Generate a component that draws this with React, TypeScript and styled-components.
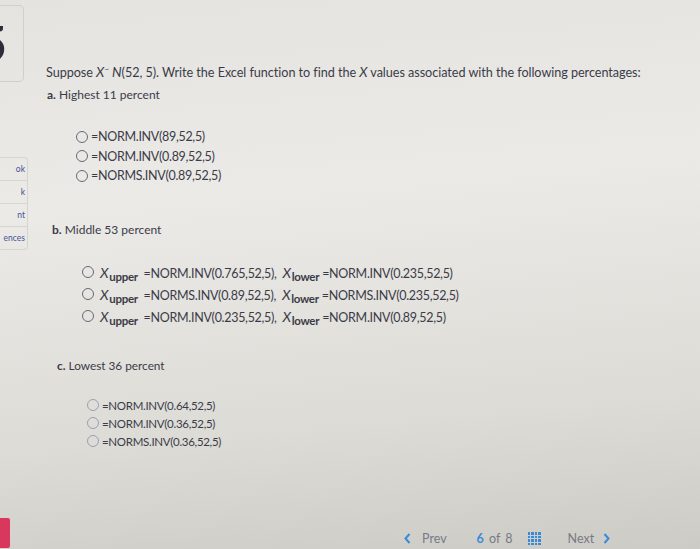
import React from 'react'
import styled, {createGlobalStyle} from 'styled-components'

const Global = createGlobalStyle`
  html, body {
    margin: 0;
    padding: 0;
    height: 100%;
  }
  body {
    font-family: Lato, "Open Sans", sans-serif;
    color: #3b3b48;
    background: linear-gradient(175deg, #e4e3df 0%, #ebeae6 35%, #dcdbd6 75%, #cdcbc6 100%);
    overflow: hidden;
  }
`

const Page = styled.div`
  display: flex;
  width: 700px;
  height: 549px;
`

const Sidebar = styled.aside`
  width: 28px;
  display: flex;
  flex-direction: column;
  flex-shrink: 0;
`

const NumberCard = styled.div`
  width: 23px;
  height: 75px;
  margin-top: 5px;
  border: 1px solid #d0cfcb;
  border-left: none;
  border-radius: 0 5px 5px 0;
  display: flex;
  align-items: center;
  justify-content: flex-end;
  overflow: hidden;
  span {
    font-size: 50px;
    line-height: 1;
    font-weight: 700;
    color: #2d2d3a;
    margin-right: 16px;
    margin-bottom: 2px;
  }
`

const Tabs = styled.div`
  margin-top: 75px;
  width: 27px;
  border: 1px solid #d6d5d1;
  border-left: none;
  border-radius: 0 4px 4px 0;
  display: flex;
  flex-direction: column;
  overflow: hidden;
`

const Tab = styled.div`
  height: 22px;
  display: flex;
  align-items: center;
  justify-content: flex-end;
  padding-right: 2px;
  font-size: 8.5px;
  color: #45549a;
  white-space: nowrap;
  border-bottom: 1px solid #d6d5d1;
  &:last-child { border-bottom: none; }
`

const Badge = styled.div`
  margin-top: auto;
  margin-bottom: 1px;
  width: 10px;
  height: 30px;
  background: #d8385e;
  border-radius: 0 2px 2px 0;
`

const Main = styled.main`
  flex: 1;
  display: flex;
  flex-direction: column;
  padding-top: 64px;
`

const Prompt = styled.p`
  margin: 0 0 0 18px;
  font-size: 12.65px;
  letter-spacing: -0.05px;
  white-space: nowrap;
  i { font-style: italic; font-size: 13.5px; }
  sup { font-size: 8px; }
`

const Section = styled.section<{$indent: number; $gap: number}>`
  margin-left: ${p => p.$indent}px;
  margin-top: ${p => p.$gap}px;
`

const Heading = styled.div<{$size?: number}>`
  font-size: ${p => p.$size ?? 12}px;
  b { font-weight: 700; }
`

const Options = styled.div<{$indent: number; $top: number; $row: number}>`
  margin-left: ${p => p.$indent}px;
  margin-top: ${p => p.$top}px;
  display: flex;
  flex-direction: column;
  gap: ${p => p.$row}px;
`

const Option = styled.label<{$size?: number; $light?: boolean}>`
  display: flex;
  align-items: center;
  gap: 3px;
  height: ${p => (p.$size ?? 12.5) + 3}px;
  font-size: ${p => p.$size ?? 12.5}px;
  letter-spacing: -0.3px;
  white-space: nowrap;
  &::before {
    content: '';
    width: 10px;
    height: 10px;
    border-radius: 50%;
    border: 1.3px solid ${p => (p.$light ? '#9aa0b4' : '#676a76')};
    flex-shrink: 0;
  }
`

const Var = styled.span`
  font-style: italic;
  font-size: 14px;
  margin-left: 3px;
  sub {
    font-style: normal;
    font-weight: 700;
    font-size: 11.5px;
    line-height: 0;
    vertical-align: -3px;
    margin: 0 3px 0 1px;
  }
`

const Footer = styled.footer`
  margin-top: auto;
  margin-bottom: 3px;
  display: flex;
  align-items: center;
  padding-left: 376px;
  font-size: 12.5px;
  color: #767a86;
`

const NavButton = styled.span<{$offset?: number; $gap?: number}>`
  display: flex;
  align-items: center;
  gap: ${p => p.$gap ?? 11}px;
  margin-left: ${p => p.$offset ?? 0}px;
  svg { flex-shrink: 0; }
`

const Counter = styled.span`
  margin-left: 30px;
  word-spacing: 2px;
  b { color: #3a8bd6; font-weight: 700; }
`

const Grid = styled.span`
  margin-left: 15px;
  display: grid;
  grid-template-columns: repeat(4, 2.5px);
  gap: 1px;
  div { width: 2.5px; height: 2.5px; background: #3a8bd6; }
`

const Chevron = ({dir}: {dir: 'l' | 'r'}) => (
  <svg width="7" height="11" viewBox="0 0 7 11">
    <path
      d={dir === 'l' ? 'M5.5 1 L1.5 5.5 L5.5 10' : 'M1.5 1 L5.5 5.5 L1.5 10'}
      fill="none"
      stroke="#3a8bd6"
      strokeWidth="2"
    />
  </svg>
)

const Pair = ({upper, lower}: {upper: string; lower: string}) => (
  <span>
    <Var>X<sub>upper</sub></Var>{upper}, <Var>X<sub>lower</sub></Var>{lower}
  </span>
)

export default function App() {
  return (
    <>
      <Global />
      <Page>
        <Sidebar>
          <NumberCard><span>5</span></NumberCard>
          <Tabs>
            <Tab>ok</Tab>
            <Tab>k</Tab>
            <Tab>nt</Tab>
            <Tab>ences</Tab>
          </Tabs>
          <Badge />
        </Sidebar>
        <Main>
          <Prompt>
            Suppose <i>X</i><sup>~</sup> <i>N</i>(52, 5). Write the Excel function to find the{' '}
            <i>X</i> values associated with the following percentages:
          </Prompt>

          <Section $indent={19} $gap={7}>
            <Heading><b>a.</b> Highest 11 percent</Heading>
            <Options $indent={29} $top={27} $row={4}>
              <Option>=NORM.INV(89,52,5)</Option>
              <Option>=NORM.INV(0.89,52,5)</Option>
              <Option>=NORMS.INV(0.89,52,5)</Option>
            </Options>
          </Section>

          <Section $indent={24} $gap={38}>
            <Heading><b>b.</b> Middle 53 percent</Heading>
            <Options $indent={30} $top={28} $row={6.5}>
              <Option>
                <Pair upper=" =NORM.INV(0.765,52,5)" lower="=NORM.INV(0.235,52,5)" />
              </Option>
              <Option>
                <Pair upper=" =NORMS.INV(0.89,52,5)" lower="=NORMS.INV(0.235,52,5)" />
              </Option>
              <Option>
                <Pair upper=" =NORM.INV(0.235,52,5)" lower="=NORM.INV(0.89,52,5)" />
              </Option>
            </Options>
          </Section>

          <Section $indent={29} $gap={34}>
            <Heading $size={11.8}><b>c.</b> Lowest 36 percent</Heading>
            <Options $indent={30} $top={25} $row={3.5}>
              <Option $size={11.5} $light>=NORM.INV(0.64,52,5)</Option>
              <Option $size={11.5} $light>=NORM.INV(0.36,52,5)</Option>
              <Option $size={11.5} $light>=NORMS.INV(0.36,52,5)</Option>
            </Options>
          </Section>

          <Footer>
            <NavButton><Chevron dir="l" /> Prev</NavButton>
            <Counter><b>6</b> of 8</Counter>
            <Grid>{Array.from({length: 16}, (_, i) => <div key={i} />)}</Grid>
            <NavButton $offset={27} $gap={9}>Next <Chevron dir="r" /></NavButton>
          </Footer>
        </Main>
      </Page>
    </>
  )
}
